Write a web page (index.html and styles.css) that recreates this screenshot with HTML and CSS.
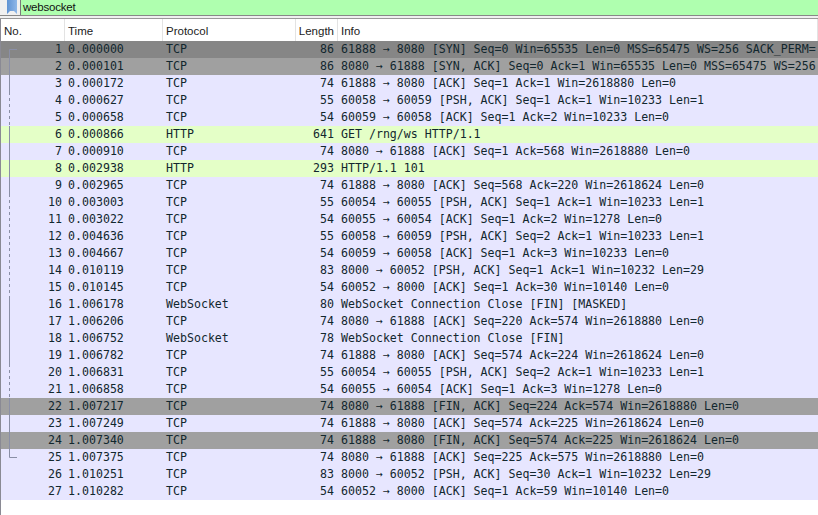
FILE: index.html
```html
<!DOCTYPE html>
<html lang="en">
<head>
<meta charset="utf-8">
<title>websocket</title>
<link rel="stylesheet" href="styles.css">
</head>
<body>
<div class="filter">
  <div class="bookmark"><svg width="10" height="15" viewBox="0 0 10 15"><defs><linearGradient id="bm" x1="0" x2="1" y1="0" y2="0"><stop offset="0" stop-color="#5f93d3"/><stop offset="1" stop-color="#8fb8e8"/></linearGradient></defs><path d="M0 0H10V14L7 11H3L0 14Z" fill="url(#bm)"/></svg></div>
  <div class="filter-input">websocket</div>
</div>
<div class="gap"></div>
<div class="table">
  <div class="row head"><span class="no">No.</span><span class="time">Time</span><span class="proto">Protocol</span><span class="len">Length</span><span class="info">Info</span></div>
  <div class="row first"><span class="no">1</span><span class="time">0.000000</span><span class="proto">TCP</span><span class="len">86</span><span class="info">61888 → 8080 [SYN] Seq=0 Win=65535 Len=0 MSS=65475 WS=256 SACK_PERM=</span></div>
  <div class="row dark"><span class="no">2</span><span class="time">0.000101</span><span class="proto">TCP</span><span class="len">86</span><span class="info">8080 → 61888 [SYN, ACK] Seq=0 Ack=1 Win=65535 Len=0 MSS=65475 WS=256</span></div>
  <div class="row tcp"><span class="no">3</span><span class="time">0.000172</span><span class="proto">TCP</span><span class="len">74</span><span class="info">61888 → 8080 [ACK] Seq=1 Ack=1 Win=2618880 Len=0</span></div>
  <div class="row tcp"><span class="no">4</span><span class="time">0.000627</span><span class="proto">TCP</span><span class="len">55</span><span class="info">60058 → 60059 [PSH, ACK] Seq=1 Ack=1 Win=10233 Len=1</span></div>
  <div class="row tcp"><span class="no">5</span><span class="time">0.000658</span><span class="proto">TCP</span><span class="len">54</span><span class="info">60059 → 60058 [ACK] Seq=1 Ack=2 Win=10233 Len=0</span></div>
  <div class="row http"><span class="no">6</span><span class="time">0.000866</span><span class="proto">HTTP</span><span class="len">641</span><span class="info">GET /rng/ws HTTP/1.1</span></div>
  <div class="row tcp"><span class="no">7</span><span class="time">0.000910</span><span class="proto">TCP</span><span class="len">74</span><span class="info">8080 → 61888 [ACK] Seq=1 Ack=568 Win=2618880 Len=0</span></div>
  <div class="row http"><span class="no">8</span><span class="time">0.002938</span><span class="proto">HTTP</span><span class="len">293</span><span class="info">HTTP/1.1 101</span></div>
  <div class="row tcp"><span class="no">9</span><span class="time">0.002965</span><span class="proto">TCP</span><span class="len">74</span><span class="info">61888 → 8080 [ACK] Seq=568 Ack=220 Win=2618624 Len=0</span></div>
  <div class="row tcp"><span class="no">10</span><span class="time">0.003003</span><span class="proto">TCP</span><span class="len">55</span><span class="info">60054 → 60055 [PSH, ACK] Seq=1 Ack=1 Win=10233 Len=1</span></div>
  <div class="row tcp"><span class="no">11</span><span class="time">0.003022</span><span class="proto">TCP</span><span class="len">54</span><span class="info">60055 → 60054 [ACK] Seq=1 Ack=2 Win=1278 Len=0</span></div>
  <div class="row tcp"><span class="no">12</span><span class="time">0.004636</span><span class="proto">TCP</span><span class="len">55</span><span class="info">60058 → 60059 [PSH, ACK] Seq=2 Ack=1 Win=10233 Len=1</span></div>
  <div class="row tcp"><span class="no">13</span><span class="time">0.004667</span><span class="proto">TCP</span><span class="len">54</span><span class="info">60059 → 60058 [ACK] Seq=1 Ack=3 Win=10233 Len=0</span></div>
  <div class="row tcp"><span class="no">14</span><span class="time">0.010119</span><span class="proto">TCP</span><span class="len">83</span><span class="info">8000 → 60052 [PSH, ACK] Seq=1 Ack=1 Win=10232 Len=29</span></div>
  <div class="row tcp"><span class="no">15</span><span class="time">0.010145</span><span class="proto">TCP</span><span class="len">54</span><span class="info">60052 → 8000 [ACK] Seq=1 Ack=30 Win=10140 Len=0</span></div>
  <div class="row tcp"><span class="no">16</span><span class="time">1.006178</span><span class="proto">WebSocket</span><span class="len">80</span><span class="info">WebSocket Connection Close [FIN] [MASKED]</span></div>
  <div class="row tcp"><span class="no">17</span><span class="time">1.006206</span><span class="proto">TCP</span><span class="len">74</span><span class="info">8080 → 61888 [ACK] Seq=220 Ack=574 Win=2618880 Len=0</span></div>
  <div class="row tcp"><span class="no">18</span><span class="time">1.006752</span><span class="proto">WebSocket</span><span class="len">78</span><span class="info">WebSocket Connection Close [FIN]</span></div>
  <div class="row tcp"><span class="no">19</span><span class="time">1.006782</span><span class="proto">TCP</span><span class="len">74</span><span class="info">61888 → 8080 [ACK] Seq=574 Ack=224 Win=2618624 Len=0</span></div>
  <div class="row tcp"><span class="no">20</span><span class="time">1.006831</span><span class="proto">TCP</span><span class="len">55</span><span class="info">60054 → 60055 [PSH, ACK] Seq=2 Ack=1 Win=10233 Len=1</span></div>
  <div class="row tcp"><span class="no">21</span><span class="time">1.006858</span><span class="proto">TCP</span><span class="len">54</span><span class="info">60055 → 60054 [ACK] Seq=1 Ack=3 Win=1278 Len=0</span></div>
  <div class="row dark"><span class="no">22</span><span class="time">1.007217</span><span class="proto">TCP</span><span class="len">74</span><span class="info">8080 → 61888 [FIN, ACK] Seq=224 Ack=574 Win=2618880 Len=0</span></div>
  <div class="row tcp"><span class="no">23</span><span class="time">1.007249</span><span class="proto">TCP</span><span class="len">74</span><span class="info">61888 → 8080 [ACK] Seq=574 Ack=225 Win=2618624 Len=0</span></div>
  <div class="row dark"><span class="no">24</span><span class="time">1.007340</span><span class="proto">TCP</span><span class="len">74</span><span class="info">61888 → 8080 [FIN, ACK] Seq=574 Ack=225 Win=2618624 Len=0</span></div>
  <div class="row tcp"><span class="no">25</span><span class="time">1.007375</span><span class="proto">TCP</span><span class="len">74</span><span class="info">8080 → 61888 [ACK] Seq=225 Ack=575 Win=2618880 Len=0</span></div>
  <div class="row tcp"><span class="no">26</span><span class="time">1.010251</span><span class="proto">TCP</span><span class="len">83</span><span class="info">8000 → 60052 [PSH, ACK] Seq=30 Ack=1 Win=10232 Len=29</span></div>
  <div class="row tcp"><span class="no">27</span><span class="time">1.010282</span><span class="proto">TCP</span><span class="len">54</span><span class="info">60052 → 8000 [ACK] Seq=1 Ack=59 Win=10140 Len=0</span></div>
  <svg class="conv" width="20" height="420" viewBox="0 0 20 420" fill="none" stroke="#8a8fa6">
    <path d="M16 8.5H8.5V51"/>
    <path d="M8.5 51V85" stroke-dasharray="3 3"/>
    <path d="M8.5 85V153"/>
    <path d="M8.5 153V255" stroke-dasharray="3 3"/>
    <path d="M8.5 255V323"/>
    <path d="M8.5 323V357" stroke-dasharray="3 3"/>
    <path d="M8.5 357V416.5H16"/>
  </svg>
</div>
</body>
</html>
```
FILE: styles.css
```css
html, body { margin: 0; padding: 0; background: #fff; overflow: hidden; }
body { width: 818px; height: 515px; font-family: "DejaVu Sans Mono", monospace; font-size: 11.6px; color: #12272e; }
.filter { display: flex; height: 15px; background: #afffaf; }
.bookmark { width: 21px; padding-left: 7px; box-sizing: border-box; background: #f0f0f0; border-right: 1px solid #7a7a7a; }
.bookmark svg { display: block; }
.filter-input { flex: 1; padding-left: 2px; font: 11.5px/15px "Liberation Sans", sans-serif; letter-spacing: -0.2px; color: #111; }
.gap { height: 4px; background: #f0f0f0; border-top: 1px solid #888; border-bottom: 1px solid #999; box-sizing: border-box; }
.table { position: relative; border-left: 1px solid #8a8a94; height: 496px; background: #fff; }
.row { display: flex; height: 17px; line-height: 17px; white-space: nowrap; overflow: hidden; }
.row span { display: block; box-sizing: border-box; overflow: hidden; flex: none; }
.no { width: 64px; padding-right: 3px; text-align: right; }
.time { width: 98px; padding-left: 3px; }
.proto { width: 133px; padding-left: 3px; }
.len { width: 42px; padding-right: 4px; text-align: right; }
.row .info { flex: 1; padding-left: 3px; }
.head { height: 22px; line-height: 24px; background: #fff; font-family: "Liberation Sans", sans-serif; font-size: 11.5px; color: #222; }
.head span { border-right: 1px solid #e3e3e3; }
.head .no { text-align: left; padding-left: 3px; }
.head .len { padding-right: 3px; }
.dark { background: #a0a0a0; }
.first { background: #868686; }
.tcp { background: #e7e6ff; }
.http { background: #e4ffc7; }
.conv { position: absolute; left: 0; top: 22px; pointer-events: none; }
```
